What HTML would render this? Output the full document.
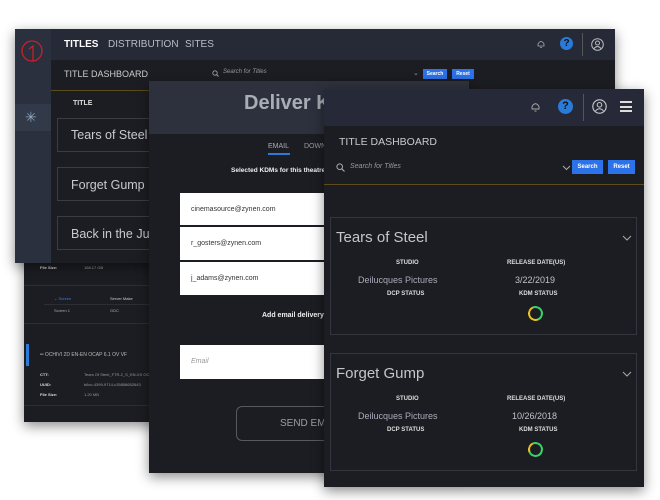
<!DOCTYPE html>
<html><head><style>
*{margin:0;padding:0;box-sizing:border-box}
body{width:660px;height:500px;background:#fff;position:relative;overflow:hidden;font-family:"Liberation Sans",Arial,sans-serif}
.a{position:absolute}
.t{position:absolute;white-space:nowrap}
.sh{box-shadow:0 4px 12px rgba(0,0,0,.45)}
</style></head><body>

<!-- Window B (detail list) -->
<div class="a sh" style="left:24px;top:240px;width:140px;height:182px;background:#1c1d22">
  <div class="t" style="left:16px;top:25px;font-size:4px;color:#ddd;font-weight:bold">File Size:</div>
  <div class="t" style="left:60px;top:25px;font-size:4px;color:#aaa">168.17 GB</div>
  <div class="a" style="left:0;top:45px;width:140px;height:1px;background:#2c2e35"></div>
  <div class="t" style="left:30px;top:56px;font-size:4px;color:#3a7de0">⌄ Screen</div>
  <div class="t" style="left:86px;top:56px;font-size:4px;color:#ccc">Server Make</div>
  <div class="a" style="left:20px;top:64px;width:120px;height:1px;background:#2c2e35"></div>
  <div class="t" style="left:30px;top:68px;font-size:4px;color:#aaa">Screen 1</div>
  <div class="t" style="left:86px;top:68px;font-size:4px;color:#aaa">GDC</div>
  <div class="a" style="left:0;top:83px;width:140px;height:1px;background:#2c2e35"></div>
  <div class="a" style="left:2px;top:104px;width:3px;height:22px;background:#2a7bd8"></div>
  <div class="t" style="left:16px;top:112px;font-size:5px;color:#bbb">═ OCHIVI 2D EN-EN OCAP 6.1 OV VF</div>
  <div class="t" style="left:16px;top:132px;font-size:4px;color:#ddd;font-weight:bold">CTT:</div>
  <div class="t" style="left:60px;top:132px;font-size:4px;color:#999">Tears Of Steel_FTR-2_S_EN-XX OC</div>
  <div class="t" style="left:16px;top:142px;font-size:4px;color:#ddd;font-weight:bold">UUID:</div>
  <div class="t" style="left:60px;top:142px;font-size:4px;color:#999">b6cc-4399-9714-c35858652643</div>
  <div class="t" style="left:16px;top:152px;font-size:4px;color:#ddd;font-weight:bold">File Size:</div>
  <div class="t" style="left:60px;top:152px;font-size:4px;color:#999">1.20 MB</div>
  <div class="a" style="left:0;top:165px;width:140px;height:1px;background:#2c2e35"></div>
</div>

<!-- Window A -->
<div class="a sh" style="left:15px;top:29px;width:600px;height:234px;background:#1c1d22;overflow:hidden">
  <div class="a" style="left:0;top:0;width:36px;height:234px;background:#2a303d"></div>
  <div class="a" style="left:0;top:75px;width:36px;height:27px;background:#323949"></div>
  <div class="t" style="left:10px;top:80px;font-size:14px;color:#8fa4c0">✳</div>
  <svg class="a" style="left:5px;top:10px" width="24" height="24"><circle cx="12" cy="12" r="10" fill="none" stroke="#d0202a" stroke-width="1.2"/><path d="M9 10 L13 7 L13 22" fill="none" stroke="#d0202a" stroke-width="1.2"/></svg>
  <div class="a" style="left:36px;top:0;width:564px;height:31px;background:#262a37"></div>
  <div class="t" style="left:49px;top:10px;font-size:10px;color:#fff;font-weight:bold">TITLES</div>
  <div class="t" style="left:93px;top:10px;font-size:10px;color:#b8bcc6">DISTRIBUTION</div>
  <div class="t" style="left:170px;top:10px;font-size:10px;color:#b8bcc6">SITES</div>
  <svg class="a" style="left:521px;top:10px" width="10" height="10"><path d="M2 7 L2 5 Q5 0 8 5 L8 7 Z M4 8.5 h2" fill="none" stroke="#aaa" stroke-width="0.8"/></svg>
  <div class="a" style="left:545px;top:8px;width:13px;height:13px;border-radius:50%;background:#2a7bd8;color:#111;font-size:10px;font-weight:bold;text-align:center;line-height:13px">?</div>
  <div class="a" style="left:567px;top:4px;width:1px;height:23px;background:#555"></div>
  <svg class="a" style="left:576px;top:9px" width="13" height="13"><circle cx="6.5" cy="6.5" r="5.8" fill="none" stroke="#bbb"/><circle cx="6.5" cy="5" r="2" fill="none" stroke="#bbb"/><path d="M3 10.5 Q6.5 6.5 10 10.5" fill="none" stroke="#bbb"/></svg>
  <div class="t" style="left:49px;top:40px;font-size:9px;color:#ccc">TITLE DASHBOARD</div>
  <svg class="a" style="left:197px;top:41px" width="7" height="7"><circle cx="3" cy="3" r="2.2" fill="none" stroke="#aaa" stroke-width="0.8"/><path d="M4.6 4.6 L6.5 6.5" stroke="#aaa" stroke-width="0.9"/></svg>
  <div class="t" style="left:208px;top:40px;font-size:6px;color:#999;font-style:italic">Search for Titles</div>
  <div class="t" style="left:398px;top:40px;font-size:7px;color:#999">⌄</div>
  <div class="a" style="left:408px;top:40px;width:24px;height:10px;background:#2c72e8;color:#fff;font-size:5px;text-align:center;line-height:10px;font-weight:bold">Search</div>
  <div class="a" style="left:437px;top:40px;width:22px;height:10px;background:#2c72e8;color:#fff;font-size:5px;text-align:center;line-height:10px;font-weight:bold">Reset</div>
  <div class="a" style="left:36px;top:61px;width:564px;height:1px;background:#5a4a1c"></div>
  <div class="t" style="left:58px;top:71px;font-size:7px;color:#ddd;font-weight:bold">TITLE</div>
  <div class="a" style="left:42px;top:89px;width:200px;height:34px;border:1px solid #3a3d46"></div>
  <div class="t" style="left:56px;top:99px;font-size:12.5px;color:#c8cad0">Tears of Steel</div>
  <div class="a" style="left:42px;top:138px;width:200px;height:34px;border:1px solid #3a3d46"></div>
  <div class="t" style="left:56px;top:149px;font-size:12.5px;color:#c8cad0">Forget Gump</div>
  <div class="a" style="left:42px;top:187px;width:200px;height:34px;border:1px solid #3a3d46"></div>
  <div class="t" style="left:56px;top:198px;font-size:12.5px;color:#c8cad0">Back in the Jungle</div>
</div>

<!-- Window C modal -->
<div class="a sh" style="left:149px;top:81px;width:320px;height:392px;background:#1c1d22;overflow:hidden">
  <div class="a" style="left:0;top:0;width:320px;height:53px;background:#2c313d"></div>
  <div class="t" style="left:95px;top:11px;font-size:20px;color:#a9adb5;font-weight:bold">Deliver KDMs</div>
  <div class="t" style="left:119px;top:62px;font-size:7px;color:#aab">EMAIL</div>
  <div class="a" style="left:119px;top:72px;width:22px;height:2px;background:#2a7bd8"></div>
  <div class="t" style="left:155px;top:62px;font-size:7px;color:#999">DOWNLOAD</div>
  <div class="t" style="left:82px;top:86px;font-size:6.5px;color:#eee;font-weight:bold">Selected KDMs for this theatre</div>
  <div class="a" style="left:31px;top:112px;width:200px;height:32px;background:#fff"></div>
  <div class="t" style="left:42px;top:125px;font-size:7px;color:#333">cinemasource@zynen.com</div>
  <div class="a" style="left:31px;top:146px;width:200px;height:33px;background:#fff"></div>
  <div class="t" style="left:42px;top:159px;font-size:7px;color:#333">r_gosters@zynen.com</div>
  <div class="a" style="left:31px;top:181px;width:200px;height:33px;background:#fff"></div>
  <div class="t" style="left:42px;top:194px;font-size:7px;color:#333">j_adams@zynen.com</div>
  <div class="t" style="left:113px;top:231px;font-size:7px;color:#eee;font-weight:bold">Add email delivery</div>
  <div class="a" style="left:31px;top:264px;width:200px;height:34px;background:#fff"></div>
  <div class="t" style="left:42px;top:277px;font-size:7px;color:#999;font-style:italic">Email</div>
  <div class="a" style="left:87px;top:325px;width:150px;height:35px;border:1px solid #555a62;border-radius:6px"></div>
  <div class="t" style="left:131px;top:337px;font-size:10px;color:#9a9ea6">SEND EMAIL</div>
</div>

<!-- Window D -->
<div class="a sh" style="left:324px;top:89px;width:320px;height:398px;background:#1c1d22;overflow:hidden">
  <div class="a" style="left:0;top:0;width:320px;height:37px;background:#262a38"></div>
  <svg class="a" style="left:206px;top:12px" width="11" height="12"><path d="M2 8 L2 5.5 Q5.5 0 9 5.5 L9 8 Z M4.5 10 h2" fill="none" stroke="#aaa" stroke-width="0.9"/></svg>
  <div class="a" style="left:234px;top:10px;width:15px;height:15px;border-radius:50%;background:#2a7bd8;color:#111;font-size:11px;font-weight:bold;text-align:center;line-height:15px">?</div>
  <div class="a" style="left:259px;top:5px;width:1px;height:27px;background:#555"></div>
  <svg class="a" style="left:268px;top:10px" width="15" height="15"><circle cx="7.5" cy="7.5" r="6.7" fill="none" stroke="#ccc" stroke-width="1.1"/><circle cx="7.5" cy="5.8" r="2.3" fill="none" stroke="#ccc"/><path d="M3.5 12 Q7.5 7.5 11.5 12" fill="none" stroke="#ccc"/></svg>
  <div class="a" style="left:296px;top:12px;width:12px;height:2px;background:#ddd"></div>
  <div class="a" style="left:296px;top:16.5px;width:12px;height:2px;background:#ddd"></div>
  <div class="a" style="left:296px;top:21px;width:12px;height:2px;background:#ddd"></div>
  <div class="t" style="left:15px;top:47px;font-size:10.5px;color:#c8cad0">TITLE DASHBOARD</div>
  <svg class="a" style="left:12px;top:74px" width="9" height="9"><circle cx="3.7" cy="3.7" r="2.8" fill="none" stroke="#aaa" stroke-width="1"/><path d="M5.8 5.8 L8.5 8.5" stroke="#aaa" stroke-width="1.2"/></svg>
  <div class="t" style="left:26px;top:74px;font-size:7px;color:#999;font-style:italic">Search for Titles</div>
  <svg class="a" style="left:238px;top:76px" width="9" height="6"><path d="M1 1 L4.5 4.5 L8 1" fill="none" stroke="#aaa"/></svg>
  <div class="a" style="left:248px;top:71px;width:31px;height:14px;background:#2c72e8;color:#fff;font-size:6px;text-align:center;line-height:14px;font-weight:bold">Search</div>
  <div class="a" style="left:284px;top:71px;width:27px;height:14px;background:#2c72e8;color:#fff;font-size:6px;text-align:center;line-height:14px;font-weight:bold">Reset</div>
  <div class="a" style="left:0;top:95px;width:320px;height:1px;background:#5e4c18"></div>

  <div class="a" style="left:6px;top:128px;width:307px;height:118px;border:1px solid #33363f"></div>
  <div class="t" style="left:12px;top:140px;font-size:15px;color:#c4c6cc">Tears of Steel</div>
  <svg class="a" style="left:298px;top:146px" width="10" height="6"><path d="M1 1 L5 5 L9 1" fill="none" stroke="#aaa"/></svg>
  <div class="t" style="left:72px;top:171px;font-size:6px;color:#ddd;font-weight:bold">STUDIO</div>
  <div class="t" style="left:183px;top:171px;font-size:6px;color:#ddd;font-weight:bold">RELEASE DATE(US)</div>
  <div class="t" style="left:34px;top:186px;font-size:9px;color:#aab">Deilucques Pictures</div>
  <div class="t" style="left:191px;top:186px;font-size:9px;color:#c0c2c8">3/22/2019</div>
  <div class="t" style="left:63px;top:202px;font-size:6px;color:#ddd;font-weight:bold">DCP STATUS</div>
  <div class="t" style="left:195px;top:202px;font-size:6px;color:#ddd;font-weight:bold">KDM STATUS</div>
  <div class="a" style="left:204px;top:217px;width:15px;height:15px;border-radius:50%;border:2px solid #3ccf6a;border-left-color:#e8c12a;border-bottom-color:#e8c12a;transform:rotate(20deg)"></div>

  <div class="a" style="left:6px;top:264px;width:307px;height:118px;border:1px solid #33363f"></div>
  <div class="t" style="left:12px;top:276px;font-size:15px;color:#c4c6cc">Forget Gump</div>
  <svg class="a" style="left:298px;top:282px" width="10" height="6"><path d="M1 1 L5 5 L9 1" fill="none" stroke="#aaa"/></svg>
  <div class="t" style="left:72px;top:307px;font-size:6px;color:#ddd;font-weight:bold">STUDIO</div>
  <div class="t" style="left:183px;top:307px;font-size:6px;color:#ddd;font-weight:bold">RELEASE DATE(US)</div>
  <div class="t" style="left:34px;top:322px;font-size:9px;color:#aab">Deilucques Pictures</div>
  <div class="t" style="left:188px;top:322px;font-size:9px;color:#c0c2c8">10/26/2018</div>
  <div class="t" style="left:63px;top:338px;font-size:6px;color:#ddd;font-weight:bold">DCP STATUS</div>
  <div class="t" style="left:195px;top:338px;font-size:6px;color:#ddd;font-weight:bold">KDM STATUS</div>
  <div class="a" style="left:204px;top:353px;width:15px;height:15px;border-radius:50%;border:2px solid #3ccf6a;border-left-color:#e8c12a;transform:rotate(20deg)"></div>
</div>
</body></html>
